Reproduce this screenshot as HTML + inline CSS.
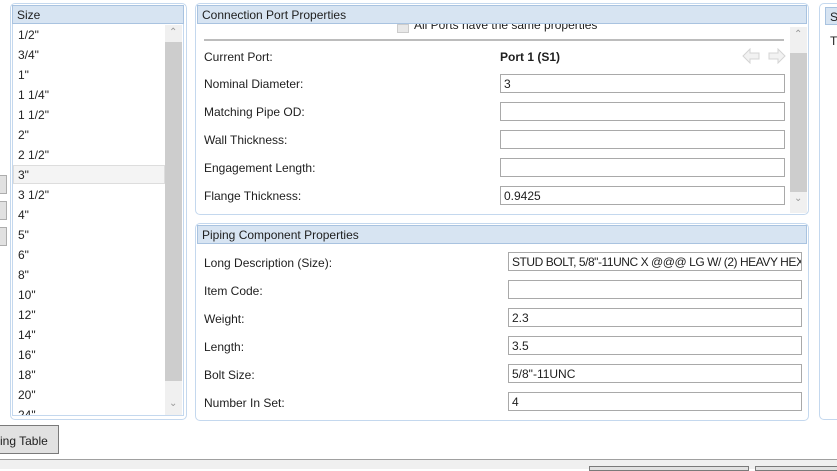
<!DOCTYPE html>
<html><head><meta charset="utf-8"><style>
*{box-sizing:border-box;margin:0;padding:0}
body{width:837px;height:469px;overflow:hidden;background:#fff;font-family:"Liberation Sans",sans-serif;font-size:12px;color:#1e1e1e;position:relative}
.a{position:absolute}
.panel{position:absolute;border:1px solid #c4d8ee;border-radius:5px;background:#fff}
.hdr{position:absolute;background:#d7e4f2;border:1px solid #a9c3e0;height:19px;padding:2px 0 0 4px;font-size:12px}
.inp{position:absolute;border:1px solid #a9a9a9;height:19px;background:#fff;padding:2px 0 0 3px;font-size:12px;white-space:nowrap;overflow:hidden}
.lbl{position:absolute;font-size:12px}
.item{position:absolute;left:18px;font-size:12px;color:#222}
.sb{position:absolute;background:#f0f0f0}
.th{position:absolute;background:#cdcdcd}
.btn{position:absolute;background:#e1e1e1;border:1px solid #adadad}
</style></head><body>

<div class="panel" style="left:10px;top:3px;width:177px;height:417px"></div>
<div class="hdr" style="left:12px;top:5px;width:172px">Size</div>
<div class="a" style="left:12px;top:24px;width:172px;height:392px;border:1px solid #c4d8ee;border-top:none"></div>
<div class="sb" style="left:165px;top:25px;width:17px;height:390px"></div>
<div class="th" style="left:165px;top:42px;width:17px;height:339px"></div>
<div class="a" style="left:169px;top:27px;font-size:10px;color:#999">&#8963;</div>
<div class="a" style="left:169px;top:398px;font-size:10px;color:#999">&#8964;</div>
<div class="a" style="left:13px;top:165px;width:152px;height:19px;background:#f4f4f4;border:1px solid #ddd"></div>
<div class="item" style="top:28px">1/2"</div>
<div class="item" style="top:48px">3/4"</div>
<div class="item" style="top:68px">1"</div>
<div class="item" style="top:88px">1 1/4"</div>
<div class="item" style="top:108px">1 1/2"</div>
<div class="item" style="top:128px">2"</div>
<div class="item" style="top:148px">2 1/2"</div>
<div class="item" style="top:168px">3"</div>
<div class="item" style="top:188px">3 1/2"</div>
<div class="item" style="top:208px">4"</div>
<div class="item" style="top:228px">5"</div>
<div class="item" style="top:248px">6"</div>
<div class="item" style="top:268px">8"</div>
<div class="item" style="top:288px">10"</div>
<div class="item" style="top:308px">12"</div>
<div class="item" style="top:328px">14"</div>
<div class="item" style="top:348px">16"</div>
<div class="item" style="top:368px">18"</div>
<div class="item" style="top:388px">20"</div>
<div class="a" style="left:12px;top:404px;width:152px;height:11px;overflow:hidden"><div class="item" style="top:4px;left:6px">24"</div></div>

<div class="btn" style="left:-2px;top:175px;width:9px;height:19px"></div>
<div class="btn" style="left:-2px;top:201px;width:9px;height:19px"></div>
<div class="btn" style="left:-2px;top:227px;width:9px;height:19px"></div>

<div class="btn" style="left:-2px;top:425px;width:61px;height:29px;border-color:#7a7a7a;font-size:12px;padding:8px 0 0 1px">ing Table</div>

<div class="panel" style="left:195px;top:3px;width:614px;height:212px"></div>
<div class="hdr" style="left:197px;top:5px;width:610px">Connection Port Properties</div>
<div class="a" style="left:197px;top:24px;width:592px;height:10px;overflow:hidden">
  <div class="a" style="left:200px;top:0;width:12px;height:9px;background:#e8e8e8;border:1px solid #ccc"></div>
  <div class="a" style="left:217px;top:-6px;font-size:12px">All Ports have the same properties</div>
</div>
<div class="a" style="left:204px;top:39px;width:580px;height:2px;background:#bcbcbc"></div>
<div class="sb" style="left:790px;top:27px;width:17px;height:186px"></div>
<div class="th" style="left:790px;top:53px;width:17px;height:139px"></div>
<div class="a" style="left:794px;top:29px;font-size:10px;color:#999">&#8963;</div>
<div class="a" style="left:794px;top:193px;font-size:10px;color:#999">&#8964;</div>
<svg class="a" style="left:742px;top:48px" width="44" height="16"><path d="M1 8 L8 1 L8 5 L17 5 L17 11 L8 11 L8 15 Z" fill="#f2f2f2" stroke="#d4d4d4"/><path d="M43 8 L36 1 L36 5 L27 5 L27 11 L36 11 L36 15 Z" fill="#f2f2f2" stroke="#d4d4d4"/></svg>

<div class="lbl" style="left:204px;top:50px">Current Port:</div>
<div class="lbl" style="left:500px;top:50px;font-weight:bold">Port 1 (S1)</div>
<div class="lbl" style="left:204px;top:77px">Nominal Diameter:</div>
<div class="inp" style="left:500px;top:74px;width:285px">3</div>
<div class="lbl" style="left:204px;top:105px">Matching Pipe OD:</div>
<div class="inp" style="left:500px;top:102px;width:285px"></div>
<div class="lbl" style="left:204px;top:133px">Wall Thickness:</div>
<div class="inp" style="left:500px;top:130px;width:285px"></div>
<div class="lbl" style="left:204px;top:161px">Engagement Length:</div>
<div class="inp" style="left:500px;top:158px;width:285px"></div>
<div class="lbl" style="left:204px;top:189px">Flange Thickness:</div>
<div class="inp" style="left:500px;top:186px;width:285px">0.9425</div>

<div class="panel" style="left:195px;top:223px;width:614px;height:198px"></div>
<div class="hdr" style="left:197px;top:225px;width:610px">Piping Component Properties</div>
<div class="lbl" style="left:204px;top:256px">Long Description (Size):</div>
<div class="inp" style="left:508px;top:252px;width:294px;letter-spacing:-0.45px">STUD BOLT, 5/8"-11UNC X @@@ LG W/ (2) HEAVY HEX</div>
<div class="lbl" style="left:204px;top:284px">Item Code:</div>
<div class="inp" style="left:508px;top:280px;width:294px"></div>
<div class="lbl" style="left:204px;top:312px">Weight:</div>
<div class="inp" style="left:508px;top:308px;width:294px">2.3</div>
<div class="lbl" style="left:204px;top:340px">Length:</div>
<div class="inp" style="left:508px;top:336px;width:294px">3.5</div>
<div class="lbl" style="left:204px;top:368px">Bolt Size:</div>
<div class="inp" style="left:508px;top:364px;width:294px">5/8"-11UNC</div>
<div class="lbl" style="left:204px;top:396px">Number In Set:</div>
<div class="inp" style="left:508px;top:392px;width:294px">4</div>

<div class="panel" style="left:819px;top:3px;width:30px;height:417px"></div>
<div class="hdr" style="left:825px;top:7px;width:20px;height:18px">Si</div>
<div class="lbl" style="left:830px;top:34px">T</div>

<div class="a" style="left:0;top:459px;width:837px;height:10px;background:#f0f0f0;border-top:1px solid #a0a0a0"></div>
<div class="a" style="left:589px;top:466px;width:160px;height:5px;border:1px solid #7a7a7a;background:#e1e1e1"></div>
<div class="a" style="left:755px;top:466px;width:90px;height:5px;border:1px solid #7a7a7a;background:#e1e1e1"></div>
</body></html>
